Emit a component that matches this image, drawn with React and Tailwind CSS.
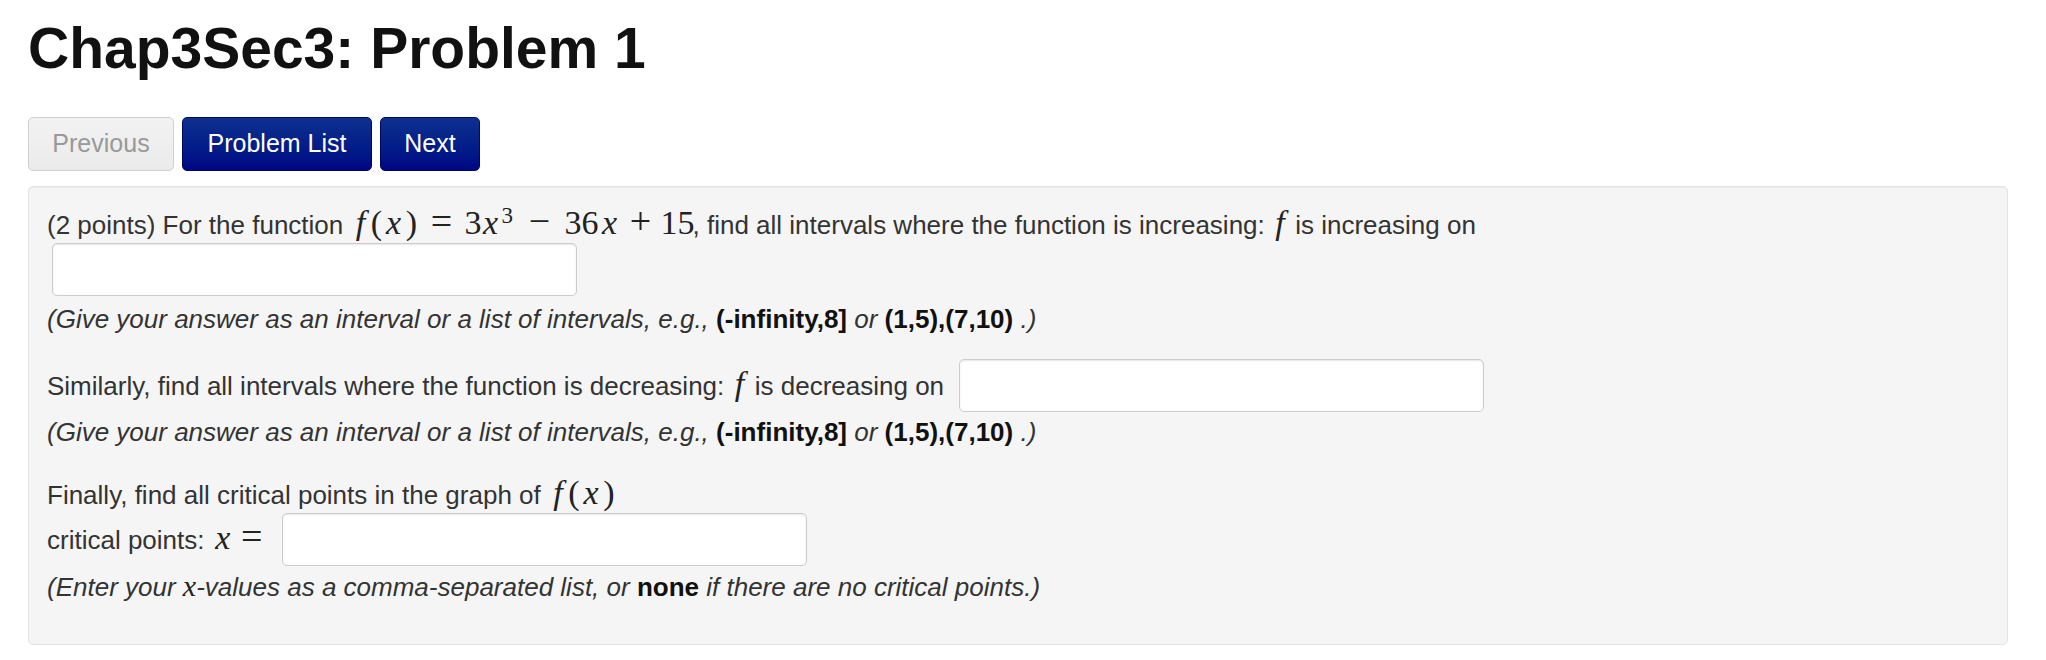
import React from 'react';

// one glyph of typeset math, given a fixed box so the spacing matches
const G = ({ className = '', children }) => (
  <span className={`inline-block text-center ${className}`}>{children}</span>
);

const mathFont = "font-['Liberation_Serif',serif] text-[34px] leading-[0] text-[#222]";

const MathF = () => (
  <span className={mathFont}>
    <G className="w-[16px] italic">f</G>
  </span>
);

const MathFx = () => (
  <span className={mathFont}>
    <G className="w-[20px] italic">f</G>
    <G className="w-[12px]">(</G>
    <G className="w-[22px] italic">x</G>
    <G className="w-[14px]">)</G>
  </span>
);

const Formula = () => (
  <span className={mathFont}>
    <G className="w-[20px] italic">f</G>
    <G className="w-[12px]">(</G>
    <G className="w-[22px] italic">x</G>
    <G className="w-[14px]">)</G>
    <G className="w-[46px] text-[38px]">=</G>
    <G className="w-[15px]">3</G>
    <G className="w-[22px] italic">x</G>
    <sup className="inline-block w-[13px] text-[23px]">3</sup>
    <G className="w-[50px] text-[38px]">−</G>
    <G className="w-[34px]">36</G>
    <G className="w-[22px] italic">x</G>
    <G className="w-[40px] text-[38px]">+</G>
    <G className="w-[32px]">15</G>
  </span>
);

const Answer = ({ className = '' }) => (
  <input
    type="text"
    className={`h-[53px] w-[525px] rounded-[5px] border border-[#cccccc] bg-white shadow-[inset_0_1px_2px_rgba(0,0,0,0.1)] ${className}`}
  />
);

const IntervalHint = () => (
  <div className="h-[36px] leading-[36px] italic whitespace-nowrap">
    (Give your answer as an interval or a list of intervals, e.g.,{' '}
    <b className="not-italic font-bold text-[#111]">(-infinity,8]</b> or{' '}
    <b className="not-italic font-bold text-[#111]">(1,5),(7,10)</b> .)
  </div>
);

export default function App() {
  return (
    <div className="min-h-screen bg-white font-['Liberation_Sans',Arial,sans-serif] text-[#333]">
      <div className="pl-[28px] pr-[38px]">
        <h1 className="mt-[17px] h-[63px] text-[57px] font-bold leading-[63px] text-[#111]">
          Chap3Sec3: Problem 1
        </h1>

        <div className="mt-[37px] flex gap-[8px]">
          <button className="flex h-[54px] w-[146px] items-center justify-center rounded-[5px] border border-[#d0d0d0] bg-gradient-to-b from-[#f2f2f2] to-[#ebebeb] text-[25px] text-[#999]">
            Previous
          </button>
          <button className="flex h-[54px] w-[190px] items-center justify-center rounded-[5px] border border-[#00075e] bg-gradient-to-b from-[#10308f] to-[#000482] text-[25px] text-white">
            Problem List
          </button>
          <button className="flex h-[54px] w-[100px] items-center justify-center rounded-[5px] border border-[#00075e] bg-gradient-to-b from-[#10308f] to-[#000482] text-[25px] text-white">
            Next
          </button>
        </div>

        <div className="mt-[15px] rounded-[5px] border border-[#e3e3e3] bg-[#f5f5f5] pt-[20px] pl-[18px] pb-[39px] text-[26px] shadow-[inset_0_1px_1px_rgba(0,0,0,0.05)]">
          <div className="h-[36px] leading-[36px] whitespace-nowrap">
            (2 points) For the function <Formula />, find all intervals where the function is
            increasing: <MathF /> is increasing on
          </div>
          <Answer className="ml-[5px] block" />
          <div className="mt-[5px]">
            <IntervalHint />
          </div>

          <div className="mt-[22px] flex h-[53px] items-center">
            <span className="leading-[36px] whitespace-nowrap">
              Similarly, find all intervals where the function is decreasing: <MathF /> is
              decreasing on
            </span>
            <Answer className="ml-[15px]" />
          </div>
          <div className="mt-[2px]">
            <IntervalHint />
          </div>

          <div className="mt-[27px] h-[36px] leading-[36px] whitespace-nowrap">
            Finally, find all critical points in the graph of <MathFx />
          </div>
          <div className="flex h-[53px] items-center">
            <span className="leading-[36px] whitespace-nowrap">
              critical points:{' '}
              <span className={mathFont}>
                <G className="w-[22px] italic">x</G>
                <G className="w-[36px] text-[38px]">=</G>
              </span>
            </span>
            <Answer className="ml-[12px]" />
          </div>
          <div className="mt-[3px] h-[36px] leading-[36px] italic whitespace-nowrap">
            (Enter your{' '}
            <span className="font-['Liberation_Serif',serif] text-[30px] leading-[0] text-[#222]">
              x
            </span>
            -values as a comma-separated list, or{' '}
            <b className="not-italic font-bold text-[#111]">none</b> if there are no critical
            points.)
          </div>
        </div>
      </div>
    </div>
  );
}
